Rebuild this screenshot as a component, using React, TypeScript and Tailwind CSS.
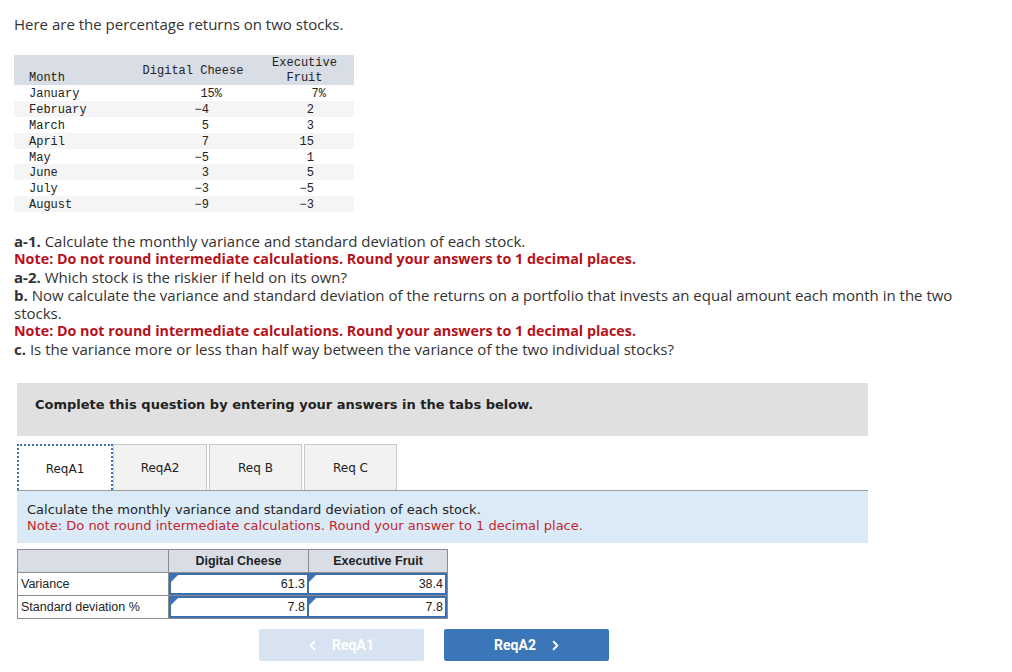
import React from "react";
import { ChevronLeft, ChevronRight } from "lucide-react";

const rows: [string, string, string, boolean][] = [
  ["January", "15", "7", true],
  ["February", "−4", "2", false],
  ["March", "5", "3", false],
  ["April", "7", "15", false],
  ["May", "−5", "1", false],
  ["June", "3", "5", false],
  ["July", "−3", "−5", false],
  ["August", "−9", "−3", false],
];

function Tri() {
  return (
    <span className="absolute left-0 top-0 w-0 h-0 border-t-[7px] border-t-[#3b73b9] border-r-[7px] border-r-transparent" />
  );
}

export default function App() {
  return (
    <div className="w-[1012px] h-[672px] bg-white text-[#333] overflow-hidden" style={{ fontFamily: "'Open Sans', sans-serif" }}>
      <div className="pl-[14px] pt-[14px] text-[15px] leading-[20px] text-[#333]">Here are the percentage returns on two stocks.</div>

      <div className="ml-[14px] mt-[21px] w-[340px] text-[12px] text-[#222]" style={{ fontFamily: "'Liberation Mono', monospace" }}>
        <div className="flex bg-[#d9dde6] h-[30px]">
          <div className="w-[117px] pl-[15px] flex items-end leading-[13px]">Month</div>
          <div className="w-[124px] flex items-center justify-center leading-[15px] pt-[2px]">Digital Cheese</div>
          <div className="flex-1 flex flex-col items-center justify-center leading-[15px] pt-[2px]">
            <span>Executive</span>
            <span>Fruit</span>
          </div>
        </div>
        {rows.map((r, i) => (
          <div key={r[0]} className={`flex h-[15.9px] leading-[18px] ${i % 2 === 1 ? "bg-[#f5f5f5]" : "bg-white"}`}>
            <div className="w-[117px] pl-[15px]">{r[0]}</div>
            <div className="w-[78px] text-right">
              {r[3] ? <span className="mr-[-13px]">{r[1]}%</span> : r[1]}
            </div>
            <div className="w-[105px] text-right">
              {r[3] ? <span className="mr-[-12px]">{r[2]}%</span> : r[2]}
            </div>
          </div>
        ))}
      </div>

      <div className="pl-[14px] pt-[20px] text-[15px] leading-[18px] text-[#333] pr-[50px]">
        <div className="h-[18px]"><b>a-1.</b> Calculate the monthly variance and standard deviation of each stock.</div>
        <div className="h-[18px] font-bold text-[14.3px] text-[#b5121b]">Note: Do not round intermediate calculations. Round your answers to 1 decimal places.</div>
        <div className="h-[18px]"><b>a-2.</b> Which stock is the riskier if held on its own?</div>
        <p><b>b.</b> Now calculate the variance and standard deviation of the returns on a portfolio that invests an equal amount each month in the two stocks.</p>
        <div className="h-[18px] font-bold text-[14.3px] text-[#b5121b]">Note: Do not round intermediate calculations. Round your answers to 1 decimal places.</div>
        <div className="h-[18px]"><b>c.</b> Is the variance more or less than half way between the variance of the two individual stocks?</div>
      </div>

      <div className="ml-[17px] mt-[25px] w-[851px]" style={{ fontFamily: "'DejaVu Sans', Verdana, sans-serif" }}>
        <div className="h-[53px] bg-[#e0e0e0] pl-[18px] pt-[13px] leading-[17px] text-[13px] font-bold text-[#222]">
          Complete this question by entering your answers in the tabs below.
        </div>
        <div className="mt-[8px] flex h-[47px] border-b border-[#9a9a9a] text-[12px] text-[#222]">
          <div className="w-[96px] bg-white border-2 border-dotted border-[#3b73b9] border-b-0 flex items-center justify-center pt-[1px]">ReqA1</div>
          <div className="w-[94px] bg-[#f2f2f2] border border-[#c8c8c8] border-b-0 flex items-center justify-center pt-[1px]">ReqA2</div>
          <div className="w-[93px] ml-[2px] bg-[#f2f2f2] border border-[#c8c8c8] border-b-0 flex items-center justify-center pt-[1px]">Req B</div>
          <div className="w-[93px] ml-[2px] bg-[#f2f2f2] border border-[#c8c8c8] border-b-0 flex items-center justify-center pt-[1px]">Req C</div>
        </div>
        <div className="h-[52px] bg-[#dbeaf7] pl-[10px] pt-[11px] text-[13px] leading-[16px]">
          <div className="text-[#222]">Calculate the monthly variance and standard deviation of each stock.</div>
          <div className="text-[#c0262d]">Note: Do not round intermediate calculations. Round your answer to 1 decimal place.</div>
        </div>

        <div className="mt-[6px] w-[431px] text-[12.5px] text-[#222]" style={{ fontFamily: "'Liberation Sans', Arial, sans-serif" }}>
          <div className="flex h-[24px] bg-[#d9dde6] border border-[#8c8c8c]">
            <div className="w-[151px] border-r border-[#8c8c8c]" />
            <div className="w-[140px] border-r border-[#8c8c8c] flex items-center justify-center font-bold">Digital Cheese</div>
            <div className="flex-1 flex items-center justify-center font-bold">Executive Fruit</div>
          </div>
          {[
            ["Variance", "61.3", "38.4"],
            ["Standard deviation %", "7.8", "7.8"],
          ].map((r) => (
            <div key={r[0]} className="flex h-[23px] border border-t-0 border-[#8c8c8c]">
              <div className="w-[151px] border-r border-[#8c8c8c] pl-[3px] flex items-center">{r[0]}</div>
              <div className="w-[140px] relative border-2 border-[#3b6fb0] flex items-center justify-end pr-[2px] bg-white">
                <Tri />
                {r[1]}
              </div>
              <div className="flex-1 relative border-2 border-l-0 border-[#3b6fb0] flex items-center justify-end pr-[2px] bg-white">
                <Tri />
                {r[2]}
              </div>
            </div>
          ))}
        </div>

        <div className="mt-[10px] flex gap-[20px] pl-[242px] text-[14px] font-bold text-white" style={{ fontFamily: "Roboto, sans-serif" }}>
          <div className="w-[165px] h-[32px] rounded-[2px] bg-[#d7e3f1] flex items-center justify-center gap-[12px] pr-[4px]">
            <ChevronLeft size={15} strokeWidth={3} />
            <span>ReqA1</span>
          </div>
          <div className="w-[165px] h-[32px] rounded-[2px] bg-[#3a76b8] flex items-center justify-center gap-[12px] pl-[4px]">
            <span>ReqA2</span>
            <ChevronRight size={15} strokeWidth={3} />
          </div>
        </div>
      </div>
    </div>
  );
}
